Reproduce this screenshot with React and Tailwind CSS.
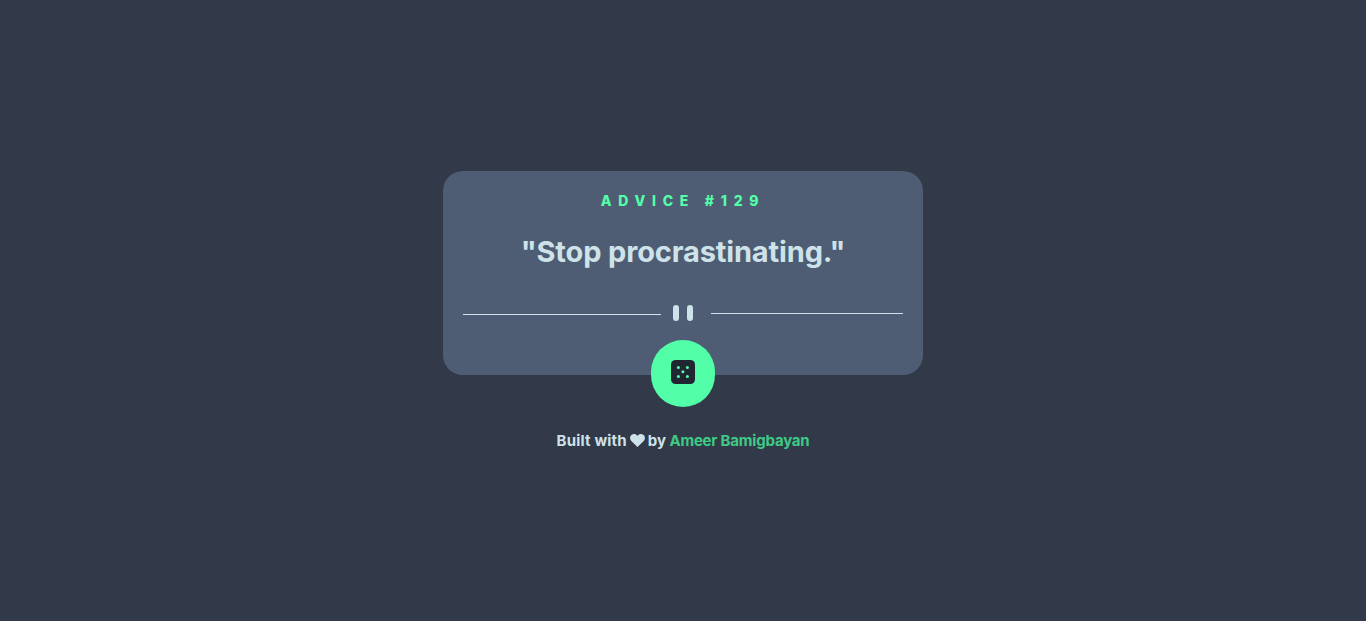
import React from 'react';

function Dice() {
  return (
    <svg width="24" height="24" viewBox="0 0 24 24" fill="none">
      <rect width="24" height="24" rx="4.5" fill="#202733" />
      <circle cx="7.4" cy="7.4" r="1.5" fill="#52FFA8" />
      <circle cx="16.4" cy="7.4" r="1.5" fill="#52FFA8" />
      <circle cx="11.9" cy="11.8" r="1.5" fill="#52FFA8" />
      <circle cx="7.4" cy="16.4" r="1.5" fill="#52FFA8" />
      <circle cx="16.4" cy="16.4" r="1.5" fill="#52FFA8" />
    </svg>
  );
}

function Heart() {
  return (
    <svg width="15" height="13" viewBox="0 0 16 14" className="inline-block align-[-1px] -mr-px">
      <path
        d="M8 14 L1.6 7.8 C-0.5 5.7 -0.4 2.6 1.5 1.1 C3.5 -0.5 6.4 -0.1 8 2.2 C9.6 -0.1 12.5 -0.5 14.5 1.1 C16.4 2.6 16.5 5.7 14.4 7.8 Z"
        fill="#CEE3E9"
      />
    </svg>
  );
}

export default function App() {
  return (
    <div className="min-h-screen pt-px bg-[#323A49] flex flex-col items-center justify-center font-['Inter',sans-serif]">
      <div className="relative w-[480px] h-[204px] rounded-[20px] bg-[#4E5D73] px-5 pt-[21px] flex flex-col items-center">
        <p className="text-[14px] leading-[18px] font-extrabold tracking-[0.48em] text-[#52FFA8]">ADVICE #129</p>
        <h1 className="mt-[22px] text-[29px] leading-[40px] font-bold tracking-[-0.005em] text-[#CEE3E9]">"Stop procrastinating."</h1>
        <div className="mt-[33px] w-full flex items-center">
          <div className="w-[198px] h-px bg-[#CEE3E9] mt-[3px]" />
          <div className="flex-1 flex gap-2 pl-3">
            <span className="w-1.5 h-4 rounded-full bg-[#CEE3E9]" />
            <span className="w-1.5 h-4 rounded-full bg-[#CEE3E9]" />
          </div>
          <div className="w-[192px] h-px bg-[#CEE3E9] mt-px" />
        </div>
        <button className="absolute left-[208px] top-[169px] w-16 h-[67px] pb-[3px] rounded-full bg-[#52FFA8] flex items-center justify-center">
          <Dice />
        </button>
      </div>
      <p className="mt-[56px] text-[15px] leading-5 font-bold tracking-[-0.005em] text-[#CEE3E9]">
        <span className="tracking-[0.2px]">Built with</span> <Heart /> by <a className="text-[#3DCB85] tracking-[-0.2px]">Ameer Bamigbayan</a>
      </p>
    </div>
  );
}
